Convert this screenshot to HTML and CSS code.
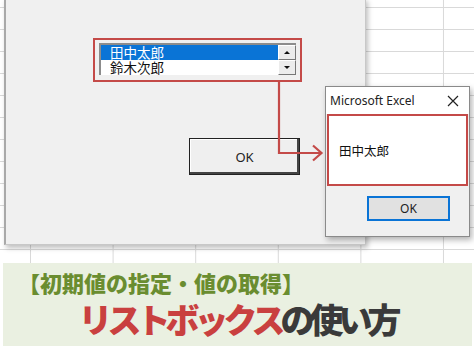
FILE: index.html
```html
<!DOCTYPE html>
<html lang="ja">
<head>
    <meta charset="UTF-8">
    <meta name="viewport" content="width=device-width, initial-scale=1.0">
    <title>リストボックスの使い方</title>
    <link rel="stylesheet" href="styles.css">
</head>
<body>
    <div class="shot">
        <!-- UserForm -->
        <div class="userform">
            <div class="list-frame">
                <div class="listbox">
                    <ul class="items">
                        <li class="selected">田中太郎</li>
                        <li>鈴木次郎</li>
                    </ul>
                    <div class="scroll">
                        <span class="arrow up"></span>
                        <span class="arrow down"></span>
                    </div>
                </div>
            </div>
            <button class="form-ok">OK</button>
        </div>

        <svg class="connector" width="474" height="263" viewBox="0 0 474 263">
            <polyline points="279,82 279,153 321,153" fill="none" stroke="#c44a48" stroke-width="2.2"/>
            <polyline points="313,145.5 321.5,153 313,160.5" fill="none" stroke="#c44a48" stroke-width="2.2"/>
        </svg>

        <!-- MsgBox -->
        <div class="msgbox">
            <div class="msg-title">
                <span>Microsoft Excel</span>
                <svg class="close" width="12" height="12" viewBox="0 0 12 12">
                    <path d="M1 1 L11 11 M11 1 L1 11" stroke="#222" stroke-width="1.2"/>
                </svg>
            </div>
            <div class="msg-body">田中太郎</div>
            <div class="msg-foot">
                <button class="msg-ok">OK</button>
            </div>
        </div>
    </div>

    <div class="banner">
        <p class="sub">【初期値の指定・値の取得】</p>
        <p class="main"><span class="red">リストボックス</span>の使い方</p>
    </div>
</body>
</html>
```

FILE: styles.css
```css
body {
    margin: 0;
    padding: 0;
    background-color: #fff;
    font-family: "Noto Sans CJK JP", "Noto Sans", sans-serif;
    width: 474px;
    height: 348px;
    overflow: hidden;
}

.shot {
    position: relative;
    height: 263px;
    overflow: hidden;
    background-color: #fff;
    background-image:
        linear-gradient(to right, #d9d9d9 1px, transparent 1px),
        linear-gradient(to bottom, #d9d9d9 1px, transparent 1px);
    background-size: 82.6px 22px, 82.6px 22px;
    background-position: 30px 7px, 30px 7px;
}

/* user form */
.userform {
    width: 362px;
    height: 247px;
    margin-top: -2px;
    margin-left: 4px;
    box-sizing: border-box;
    padding-top: 40px;
    background-color: #f0f0f0;
    border-left: 2px solid #a9a9a9;
    border-right: 1px solid #c8c8c8;
    border-bottom: 1px solid #c8c8c8;
    box-shadow: 2px 3px 5px rgba(0, 0, 0, 0.25);
}

.list-frame {
    width: 209px;
    height: 44px;
    margin-left: 87px;
    box-sizing: border-box;
    border: 2px solid #c44a48;
    padding: 3px 4px 0 4px;
}

.listbox {
    display: flex;
    height: 32px;
    box-sizing: border-box;
    background-color: #fff;
    border-top: 2px solid #8c8c8c;
    border-left: 2px solid #8c8c8c;
}

.items {
    flex: 1;
    list-style: none;
    margin: 0;
    padding: 0;
}

.items li {
    height: 15px;
    line-height: 15px;
    padding-left: 9px;
    font-size: 13.5px;
    color: #111;
}

.items li.selected {
    background-color: #0a74d6;
    color: #fff;
}

.scroll {
    width: 18px;
    display: flex;
    flex-direction: column;
}

.arrow {
    flex: 1;
    position: relative;
    background-color: #ececec;
    border-top: 1px solid #fff;
    border-left: 1px solid #fff;
    border-right: 1px solid #777;
    border-bottom: 1px solid #777;
}

.arrow::after {
    content: "";
    position: absolute;
    left: 5px;
    top: 5px;
    border-left: 3px solid transparent;
    border-right: 3px solid transparent;
}

.arrow.up::after {
    border-bottom: 3px solid #111;
}

.arrow.down::after {
    border-top: 3px solid #111;
}

.form-ok {
    display: block;
    width: 111px;
    height: 37px;
    margin-top: 56px;
    margin-left: 183px;
    background-color: #efefef;
    border: 1px solid #222;
    box-shadow: inset -2px -2px 0 #444, inset 1px 1px 0 #fff;
    font-family: "Noto Sans", sans-serif;
    font-size: 13px;
    color: #222;
    padding: 0;
}

.connector {
    position: absolute;
    left: 0;
    top: 0;
}

/* message box */
.msgbox {
    position: absolute;
    left: 325px;
    top: 86px;
    width: 145px;
    height: 151px;
    box-sizing: border-box;
    display: flex;
    flex-direction: column;
    background-color: #f0f0f0;
    border: 1px solid #8a8a8a;
    box-shadow: 2px 3px 6px rgba(0, 0, 0, 0.3);
}

.msg-title {
    height: 27px;
    display: flex;
    align-items: center;
    justify-content: space-between;
    padding: 0 10px 0 4px;
    background-color: #fff;
    font-family: "Noto Sans", sans-serif;
    font-size: 12px;
    color: #222;
}

.msg-body {
    height: 72px;
    box-sizing: border-box;
    margin: 0 1px;
    border: 2px solid #c44a48;
    background-color: #fff;
    padding: 0 0 0 10px;
    display: flex;
    align-items: center;
    font-size: 12.5px;
    color: #111;
}

.msg-foot {
    flex: 1;
    display: flex;
    justify-content: flex-end;
    align-items: flex-start;
    padding: 10px 19px 0 0;
}

.msg-ok {
    width: 83px;
    height: 25px;
    background-color: #e1e1e1;
    border: 2px solid #0a74d6;
    font-family: "Noto Sans", sans-serif;
    font-size: 12px;
    color: #222;
    padding: 0;
}

/* title banner */
.banner {
    height: 83px;
    margin: 0 2px 0 3px;
    background-color: #eaf0e1;
    box-sizing: border-box;
    padding-top: 3px;
}

.banner p {
    margin: 0;
    font-weight: 900;
    white-space: nowrap;
}

.sub {
    font-size: 22px;
    line-height: 32px;
    color: #6a8d30;
    padding-left: 15px;
}

.main {
    font-size: 34px;
    line-height: 42px;
    letter-spacing: -5px;
    text-align: center;
    color: #3a3a3a;
}

.main .red {
    color: #c9403f;
}
```
